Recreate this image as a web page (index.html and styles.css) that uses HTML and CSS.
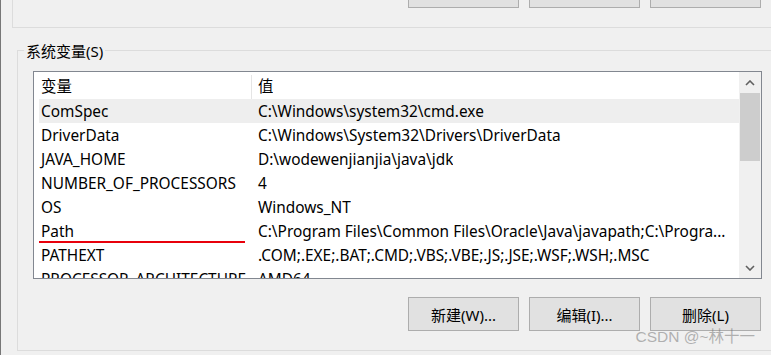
FILE: index.html
```html
<!DOCTYPE html>
<html lang="zh-CN">
<head>
    <meta charset="UTF-8">
    <meta name="viewport" content="width=device-width, initial-scale=1.0">
    <title>环境变量</title>
    <link rel="stylesheet" href="styles.css">
</head>
<body>
<div class="window">
    <div class="user-group">
        <div class="btn-row top-row">
            <button class="btn"></button>
            <button class="btn"></button>
            <button class="btn"></button>
        </div>
    </div>
    <div class="sys-group">
        <div class="group-title">系统变量(S)</div>
        <div class="list">
            <div class="list-body">
                <div class="row list-head">
                    <span class="col-name">变量</span>
                    <span class="col-value">值</span>
                </div>
                <div class="row selected">
                    <span class="col-name">ComSpec</span>
                    <span class="col-value">C:\Windows\system32\cmd.exe</span>
                </div>
                <div class="row">
                    <span class="col-name">DriverData</span>
                    <span class="col-value">C:\Windows\System32\Drivers\DriverData</span>
                </div>
                <div class="row">
                    <span class="col-name">JAVA_HOME</span>
                    <span class="col-value">D:\wodewenjianjia\java\jdk</span>
                </div>
                <div class="row">
                    <span class="col-name">NUMBER_OF_PROCESSORS</span>
                    <span class="col-value">4</span>
                </div>
                <div class="row">
                    <span class="col-name">OS</span>
                    <span class="col-value">Windows_NT</span>
                </div>
                <div class="row">
                    <span class="col-name marked">Path</span>
                    <span class="col-value">C:\Program Files\Common Files\Oracle\Java\javapath;C:\Progra...</span>
                </div>
                <div class="row">
                    <span class="col-name">PATHEXT</span>
                    <span class="col-value">.COM;.EXE;.BAT;.CMD;.VBS;.VBE;.JS;.JSE;.WSF;.WSH;.MSC</span>
                </div>
                <div class="row">
                    <span class="col-name">PROCESSOR_ARCHITECTURE</span>
                    <span class="col-value">AMD64</span>
                </div>
            </div>
            <div class="scrollbar">
                <div class="sb-arrow">
                    <svg width="10" height="6" viewBox="0 0 10 6"><polyline points="1,5 5,1 9,5" fill="none" stroke="#606060" stroke-width="1.6"/></svg>
                </div>
                <div class="sb-track"><div class="sb-thumb"></div></div>
                <div class="sb-arrow">
                    <svg width="10" height="6" viewBox="0 0 10 6"><polyline points="1,1 5,5 9,1" fill="none" stroke="#606060" stroke-width="1.6"/></svg>
                </div>
            </div>
        </div>
        <div class="btn-row">
            <button class="btn">新建(W)...</button>
            <button class="btn">编辑(I)...</button>
            <button class="btn">删除(L)</button>
        </div>
        <div class="watermark">CSDN @~林十一</div>
    </div>
</div>
</body>
</html>
```

FILE: styles.css
```css
body {
    margin: 0;
    background: #f0f0f0;
    font-family: "Noto Sans", "Noto Sans CJK SC", sans-serif;
    font-size: 15px;
    color: #000;
    overflow: hidden;
}
.window {
    height: 355px;
    border-left: 1px solid #777;
    box-sizing: border-box;
}
.user-group {
    display: flow-root;
    height: 28px;
    margin-left: 11px;
    border-left: 1px solid #dcdcdc;
    border-bottom: 1px solid #dcdcdc;
    box-sizing: border-box;
}
.btn-row {
    display: flex;
    justify-content: flex-end;
    gap: 10px;
    padding-right: 10px;
}
.top-row {
    margin-top: -26px;
}
.btn {
    width: 111px;
    height: 34px;
    background: #e1e1e1;
    border: 1px solid #adadad;
    font-family: inherit;
    font-size: 15px;
    color: #000;
    padding: 0;
}
.sys-group {
    position: relative;
    height: 301px;
    margin-top: 22px;
    margin-left: 16px;
    padding-left: 15px;
    border: 1px solid #dcdcdc;
    border-right: none;
    box-sizing: border-box;
}
.group-title {
    width: fit-content;
    margin: -10px 0 0 -9px;
    padding: 0 2px;
    line-height: 20px;
    background: #f0f0f0;
}
.list {
    display: flex;
    width: 729px;
    height: 208px;
    margin-top: 10px;
    border: 1px solid #828790;
    background: #fff;
    box-sizing: border-box;
    font-size: 15.4px;
}
.list-body {
    width: 705px;
    padding-left: 5px;
    box-sizing: border-box;
    overflow: hidden;
}
.row {
    display: flex;
    height: 24px;
    padding-top: 2px;
    line-height: 22px;
    white-space: nowrap;
    box-sizing: border-box;
}
.list-head {
    height: 27px;
    padding-top: 3px;
    line-height: 24px;
}
.row.selected {
    background: #eeeeee;
}
.col-name {
    position: relative;
    width: 213px;
    flex-shrink: 0;
    padding-left: 2px;
    border-right: 1px solid transparent;
    box-sizing: border-box;
    overflow: hidden;
}
.list-head .col-name {
    border-right-color: #e5e5e5;
}
.col-value {
    padding-left: 6px;
    overflow: hidden;
}
.marked::after {
    content: "";
    position: absolute;
    left: 0;
    bottom: 0;
    width: 206px;
    height: 2px;
    background: #e8000b;
}
.scrollbar {
    width: 22px;
    display: flex;
    flex-direction: column;
    background: #f0f0f0;
}
.sb-arrow {
    height: 21px;
    display: flex;
    align-items: center;
    justify-content: center;
}
.sb-track {
    flex: 1;
}
.sb-thumb {
    height: 68px;
    margin: 0 1px;
    background: #cdcdcd;
}
.btn-row:not(.top-row) {
    margin-top: 18px;
}
.watermark {
    position: absolute;
    right: 16px;
    bottom: 4px;
    font-family: "Liberation Sans", "Noto Sans CJK SC", sans-serif;
    font-size: 15.5px;
    line-height: 18px;
    color: rgba(110, 110, 110, 0.5);
}
```
